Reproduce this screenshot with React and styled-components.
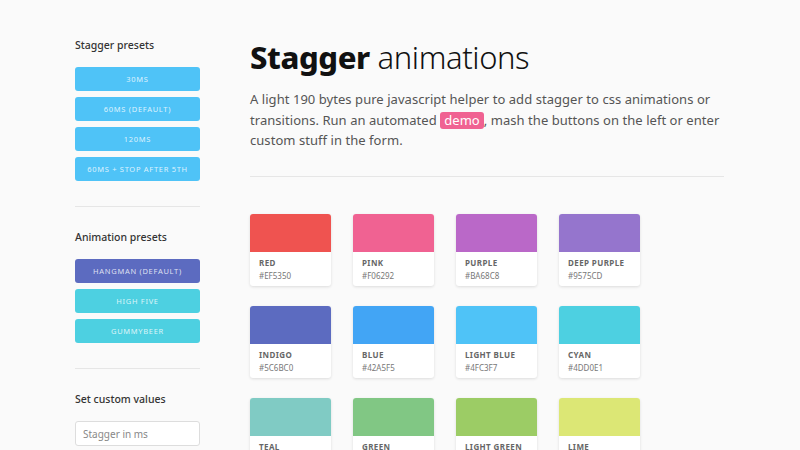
import styled, { createGlobalStyle } from "styled-components"

const GlobalStyle = createGlobalStyle`
  body {
    margin: 0;
    background: #fafafa;
    font-family: "Noto Sans", "Open Sans", sans-serif;
    color: #333;
  }
`

const staggerPresets = ["30ms", "60ms (default)", "120ms", "60ms + stop after 5th"]
const animationPresets = [
  { label: "Hangman (default)", active: true },
  { label: "High five" },
  { label: "Gummybeer" },
]

const colors = [
  ["Red", "#EF5350"],
  ["Pink", "#F06292"],
  ["Purple", "#BA68C8"],
  ["Deep Purple", "#9575CD"],
  ["Indigo", "#5C6BC0"],
  ["Blue", "#42A5F5"],
  ["Light Blue", "#4FC3F7"],
  ["Cyan", "#4DD0E1"],
  ["Teal", "#80CBC4"],
  ["Green", "#81C784"],
  ["Light Green", "#9CCC65"],
  ["Lime", "#DCE775"],
]

const App = () => {
  return (
    <>
      <GlobalStyle />
      <Page>
        <Sidebar>
          <Section>
            <SideTitle>Stagger presets</SideTitle>
            {staggerPresets.map((p) => (
              <PresetButton key={p} $bg="#4FC3F7">{p}</PresetButton>
            ))}
          </Section>
          <Divider />
          <Section>
            <SideTitle>Animation presets</SideTitle>
            {animationPresets.map((p) => (
              <PresetButton key={p.label} $bg={p.active ? "#5C6BC0" : "#4DD0E1"}>
                {p.label}
              </PresetButton>
            ))}
          </Section>
          <Divider />
          <Section>
            <SideTitle>Set custom values</SideTitle>
            <Input placeholder="Stagger in ms" />
          </Section>
        </Sidebar>
        <Main>
          <Title>
            <strong>Stagger</strong> animations
          </Title>
          <Intro>
            A light 190 bytes pure javascript helper to add stagger to css animations or
            transitions. Run an automated <Demo>demo</Demo>, mash the buttons on the left or enter
            custom stuff in the form.
          </Intro>
          <Rule />
          <Grid>
            {colors.map(([name, hex]) => (
              <Card key={name}>
                <Swatch $color={hex} />
                <CardBody>
                  <ColorName>{name}</ColorName>
                  <ColorHex>{hex}</ColorHex>
                </CardBody>
              </Card>
            ))}
          </Grid>
        </Main>
      </Page>
    </>
  )
}

const Page = styled.div`
  display: flex;
  gap: 50px;
  padding: 37px 0 0 75px;
  height: 450px;
  box-sizing: border-box;
  overflow: hidden;
`

const Sidebar = styled.aside`
  width: 125px;
  flex-shrink: 0;
  display: flex;
  flex-direction: column;
`

const Section = styled.div`
  display: flex;
  flex-direction: column;
  gap: 6px;
`

const SideTitle = styled.h4`
  margin: 0 0 8px;
  font-size: 10.5px;
  line-height: 16px;
  font-weight: 500;
  color: #333;
`

const PresetButton = styled.button`
  height: 24px;
  border: none;
  border-radius: 3px;
  background: ${(p) => p.$bg};
  color: rgba(255, 255, 255, 0.8);
  font-family: inherit;
  font-size: 7.5px;
  letter-spacing: 0.7px;
  text-transform: uppercase;
  cursor: pointer;
  padding: 0;
`

const Divider = styled.hr`
  border: none;
  border-top: 1px solid #e6e6e6;
  margin: 25px 0 22px;
`

const Input = styled.input`
  height: 25px;
  box-sizing: border-box;
  border: 1px solid #ddd;
  border-radius: 3px;
  background: #fff;
  padding: 0 7px;
  font-family: inherit;
  font-size: 10px;
  &::placeholder {
    color: #888;
  }
`

const Main = styled.main`
  width: 474px;
  flex-shrink: 0;
`

const Title = styled.h1`
  margin: 0;
  font-size: 31px;
  line-height: 40px;
  font-weight: 300;
  letter-spacing: -0.4px;
  color: #111;
  strong {
    font-weight: 800;
  }
`

const Intro = styled.p`
  margin: 12px 0 0;
  font-size: 13px;
  line-height: 20.5px;
  letter-spacing: 0.05px;
  color: #555;
`

const Demo = styled.span`
  display: inline-block;
  line-height: 17px;
  background: #f06292;
  color: #fff;
  border-radius: 3px;
  padding: 0 4px;
`

const Rule = styled.hr`
  border: none;
  border-top: 1px solid #e6e6e6;
  margin: 25px 0 37px;
`

const Grid = styled.div`
  display: grid;
  grid-template-columns: repeat(4, 81px);
  column-gap: 22px;
  row-gap: 20px;
`

const Card = styled.div`
  background: #fff;
  border-radius: 3px;
  overflow: hidden;
  box-shadow: 0 1px 3px rgba(0, 0, 0, 0.12);
`

const Swatch = styled.div`
  height: 38px;
  background: ${(p) => p.$color};
`

const CardBody = styled.div`
  padding: 6px 9px 5px;
  display: flex;
  flex-direction: column;
  gap: 3px;
`

const ColorName = styled.div`
  font-size: 8px;
  line-height: 10px;
  font-weight: 700;
  letter-spacing: 0.4px;
  text-transform: uppercase;
  color: #666;
`

const ColorHex = styled.div`
  font-size: 8px;
  line-height: 10px;
  color: #777;
`

export default App
